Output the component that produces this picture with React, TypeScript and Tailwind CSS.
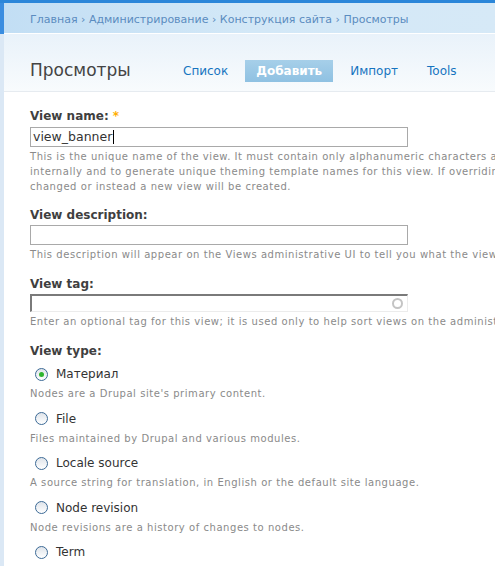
import type { ReactNode } from 'react'

const FONT = { fontFamily: '"DejaVu Sans", Verdana, sans-serif' }

const TYPES = [
  { label: 'Материал', desc: "Nodes are a Drupal site's primary content.", checked: true },
  { label: 'File', desc: 'Files maintained by Drupal and various modules.' },
  { label: 'Locale source', desc: 'A source string for translation, in English or the default site language.' },
  { label: 'Node revision', desc: 'Node revisions are a history of changes to nodes.' },
  { label: 'Term', desc: 'Taxonomy terms are attached to nodes.' },
]

function Label({ children, required }: { children: ReactNode; required?: boolean }) {
  return (
    <div className="h-[18px] text-[12px] font-bold leading-[18px] text-[#3f3f3f]">
      {children}
      {required && <span className="ml-1 text-[#ffae00]">*</span>}
    </div>
  )
}

function Desc({ lines }: { lines: string[] }) {
  return (
    <div className="mt-[2px] text-[10px] leading-[15px] tracking-[0.55px] text-[#8a8a8a]">
      {lines.map((l) => (
        <div key={l} className="whitespace-nowrap">
          {l}
        </div>
      ))}
    </div>
  )
}

function Radio({ checked }: { checked?: boolean }) {
  return (
    <span className="flex h-[13px] w-[13px] items-center justify-center rounded-full border border-[#3c6a96] bg-gradient-to-b from-[#dfe4ea] to-white">
      {checked && <span className="h-[5px] w-[5px] rounded-full bg-[#2fb52f]" />}
    </span>
  )
}

export default function App() {
  return (
    <div style={FONT} className="relative h-[566px] w-[495px] overflow-hidden border-t-[3px] border-[#2b86d9] bg-white">
      <div className="flex h-full">
        <div className="w-[4px] shrink-0 bg-[#dbe8f5]">
          <div className="h-[31px] bg-[#3a8de0]" />
        </div>
        <div className="flex min-w-0 flex-1 flex-col">
          {/* Breadcrumb */}
          <div className="flex h-[31px] shrink-0 items-center border-b border-white bg-gradient-to-r from-[#c2def4] via-[#d3e8f7] to-[#d6e9f7] pl-[26px] pt-[5px] text-[11px] text-[#5b8cc0]">
            Главная › Администрирование › Конструкция сайта › Просмотры
          </div>

          {/* Header */}
          <div className="flex h-[58px] shrink-0 items-end border-b border-[#e6ebf0] bg-gradient-to-b from-[#e9f2fa] to-[#f8fbfd] pb-[9px] pl-[26px]">
            <h1 className="w-[153px] text-[17px] leading-[24px] text-[#444]">Просмотры</h1>
            <nav className="flex items-center text-[12px] text-[#1674c0]">
              <span className="pb-[1px]">Список</span>
              <span className="ml-[17px] flex h-[22px] w-[88px] items-center justify-center bg-gradient-to-b from-[#a6cfe9] to-[#8fc1e2] font-bold text-white">
                Добавить
              </span>
              <span className="ml-[17px]">Импорт</span>
              <span className="ml-[29px]">Tools</span>
            </nav>
          </div>

          {/* Form */}
          <div className="shrink-0 pl-[26px] pt-[15px]">
            <Label required>View name:</Label>
            <div className="mt-[2px] flex h-[20px] w-[378px] items-center border border-[#a9a9a9] pl-[2px] text-[12.5px] text-[#333]">
              view_banner<span className="ml-px h-[14px] w-px bg-black" />
            </div>
            <Desc
              lines={[
                'This is the unique name of the view. It must contain only alphanumeric characters and underscores; it is used to identify the view',
                'internally and to generate unique theming template names for this view. If overriding a module provided view, the name must not be',
                'changed or instead a new view will be created.',
              ]}
            />

            <div className="mt-[12px]">
              <Label>View description:</Label>
              <div className="mt-[1px] h-[20px] w-[378px] border border-[#a9a9a9]" />
              <Desc lines={['This description will appear on the Views administrative UI to tell you what the view is about.']} />
            </div>

            <div className="mt-[13px]">
              <Label>View tag:</Label>
              <div className="mt-[1px] flex h-[18px] w-[378px] items-center justify-end border-b border-l-2 border-r border-t-2 border-b-[#ececec] border-l-[#7a7a7a] border-r-[#ececec] border-t-[#7a7a7a] pr-[4px]">
                <span className="h-[11px] w-[11px] rounded-full border-2 border-[#c4c4c4]" />
              </div>
              <Desc lines={['Enter an optional tag for this view; it is used only to help sort views on the administrative page.']} />
            </div>

            <div className="mt-[13px]">
              <Label>View type:</Label>
              {TYPES.map((t) => (
                <div key={t.label} className="mt-[4px]">
                  <div className="flex h-[20px] items-center gap-[8px] pl-[5px] text-[12px] text-[#333]">
                    <Radio checked={t.checked} />
                    {t.label}
                  </div>
                  <Desc lines={[t.desc]} />
                  <div className="h-[3.5px]" />
                </div>
              ))}
            </div>
          </div>
        </div>
      </div>
    </div>
  )
}
